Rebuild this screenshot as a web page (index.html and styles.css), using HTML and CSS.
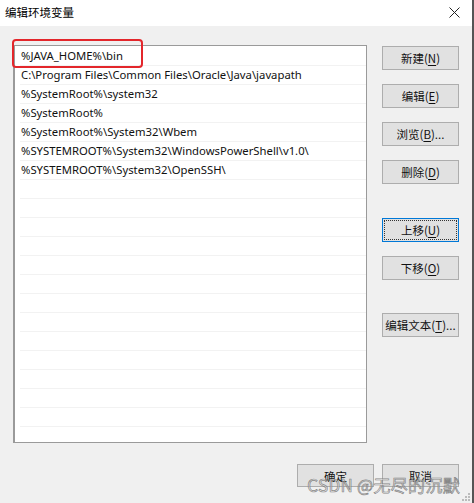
FILE: index.html
```html
<!DOCTYPE html>
<html lang="zh-CN">
<head>
    <meta charset="UTF-8">
    <title>编辑环境变量</title>
    <link rel="stylesheet" href="styles.css">
</head>
<body>
    <div class="window">
        <div class="titlebar">
            <span class="title">编辑环境变量</span>
            <svg class="close" width="11" height="11" viewBox="0 0 11 11">
                <path d="M0.5 0.5 L10.5 10.5 M10.5 0.5 L0.5 10.5" stroke="#222" stroke-width="1"/>
            </svg>
        </div>
        <div class="content">
            <div class="path-list">
                <div class="row">%JAVA_HOME%\bin</div>
                <div class="row">C:\Program Files\Common Files\Oracle\Java\javapath</div>
                <div class="row">%SystemRoot%\system32</div>
                <div class="row">%SystemRoot%</div>
                <div class="row">%SystemRoot%\System32\Wbem</div>
                <div class="row">%SYSTEMROOT%\System32\WindowsPowerShell\v1.0\</div>
                <div class="row">%SYSTEMROOT%\System32\OpenSSH\</div>
                <div class="row"></div>
                <div class="row"></div>
                <div class="row"></div>
                <div class="row"></div>
                <div class="row"></div>
                <div class="row"></div>
                <div class="row"></div>
                <div class="row"></div>
                <div class="row"></div>
                <div class="row"></div>
                <div class="row"></div>
                <div class="row"></div>
                <div class="row"></div>
                <div class="row"></div>
            </div>
            <div class="side-buttons">
                <button class="btn">新建(<u>N</u>)</button>
                <button class="btn">编辑(<u>E</u>)</button>
                <button class="btn">浏览(<u>B</u>)...</button>
                <button class="btn">删除(<u>D</u>)</button>
                <button class="btn btn-focus move-up">上移(<u>U</u>)</button>
                <button class="btn">下移(<u>O</u>)</button>
                <button class="btn edit-text">编辑文本(<u>T</u>)...</button>
            </div>
        </div>
        <div class="footer">
            <button class="btn">确定</button>
            <button class="btn">取消</button>
        </div>

        <div class="highlight"></div>
        <div class="watermark">CSDN @无尽的沉默</div>
        <svg class="grip" width="10" height="10" viewBox="0 0 10 10">
            <rect x="7" y="1" width="2" height="2" fill="#bbb"/>
            <rect x="7" y="4" width="2" height="2" fill="#bbb"/>
            <rect x="4" y="4" width="2" height="2" fill="#bbb"/>
            <rect x="7" y="7" width="2" height="2" fill="#bbb"/>
            <rect x="4" y="7" width="2" height="2" fill="#bbb"/>
            <rect x="1" y="7" width="2" height="2" fill="#bbb"/>
        </svg>
    </div>
</body>
</html>
```

FILE: styles.css
```css
* {
    margin: 0;
    padding: 0;
    box-sizing: border-box;
}
body {
    width: 474px;
    height: 503px;
    overflow: hidden;
    background: #f0f0f0;
    font-family: "Noto Sans", "Noto Sans CJK SC", sans-serif;
    font-size: 12px;
    color: #000;
}
.window {
    position: relative;
    width: 474px;
    height: 503px;
    background: #f0f0f0;
    border-right: 2px solid #555;
}
.titlebar {
    height: 26px;
    background: #fff;
    display: flex;
    align-items: center;
    justify-content: space-between;
    padding: 0 12px 2px 5px;
}
.title {
    font-family: "Noto Sans CJK SC", sans-serif;
    font-size: 11.5px;
    color: #000;
}
.content {
    display: flex;
    padding: 19px 0 0 13px;
}
.path-list {
    width: 354px;
    height: 398px;
    background: #fff;
    border: 1px solid #9a9a9a;
    border-left-width: 2px;
    padding: 1px 0 0 5px;
    overflow: hidden;
}
.row {
    height: 19px;
    line-height: 18px;
    padding-left: 1px;
    border-bottom: 1px solid #f2f2f2;
    font-family: "Noto Sans", sans-serif;
    font-size: 11.3px;
    white-space: nowrap;
    color: #111;
}
.side-buttons {
    display: flex;
    flex-direction: column;
    margin-left: 15px;
    padding-top: 1px;
    gap: 14px;
}
.btn {
    position: relative;
    width: 77px;
    height: 24px;
    background: #e1e1e1;
    border: 1px solid #adadad;
    font-family: "Noto Sans CJK SC", sans-serif;
    font-size: 11.5px;
    color: #111;
}
.btn u {
    text-underline-offset: 2px;
}
.move-up {
    margin-top: 20px;
}
.edit-text {
    margin-top: 19px;
}
.btn-focus {
    border: 1px solid #0078d7;
}
.btn-focus::after {
    content: "";
    position: absolute;
    inset: 1px;
    border: 1px dotted #333;
}
.footer {
    display: flex;
    justify-content: flex-end;
    gap: 8px;
    padding: 21px 13px 0 0;
}
.footer .btn {
    height: 23px;
}
.highlight {
    position: absolute;
    left: 12px;
    top: 39px;
    width: 131px;
    height: 29px;
    border: 2px solid #e3262b;
    border-radius: 4px;
}
.watermark {
    position: absolute;
    right: 12px;
    bottom: 6px;
    font-family: "Noto Sans CJK SC", sans-serif;
    font-size: 17px;
    color: rgba(225, 225, 225, 0.6);
    -webkit-text-stroke: 0.7px rgba(110, 110, 110, 0.8);
    letter-spacing: 0.3px;
}
.grip {
    position: absolute;
    right: 1px;
    bottom: 1px;
}
```
